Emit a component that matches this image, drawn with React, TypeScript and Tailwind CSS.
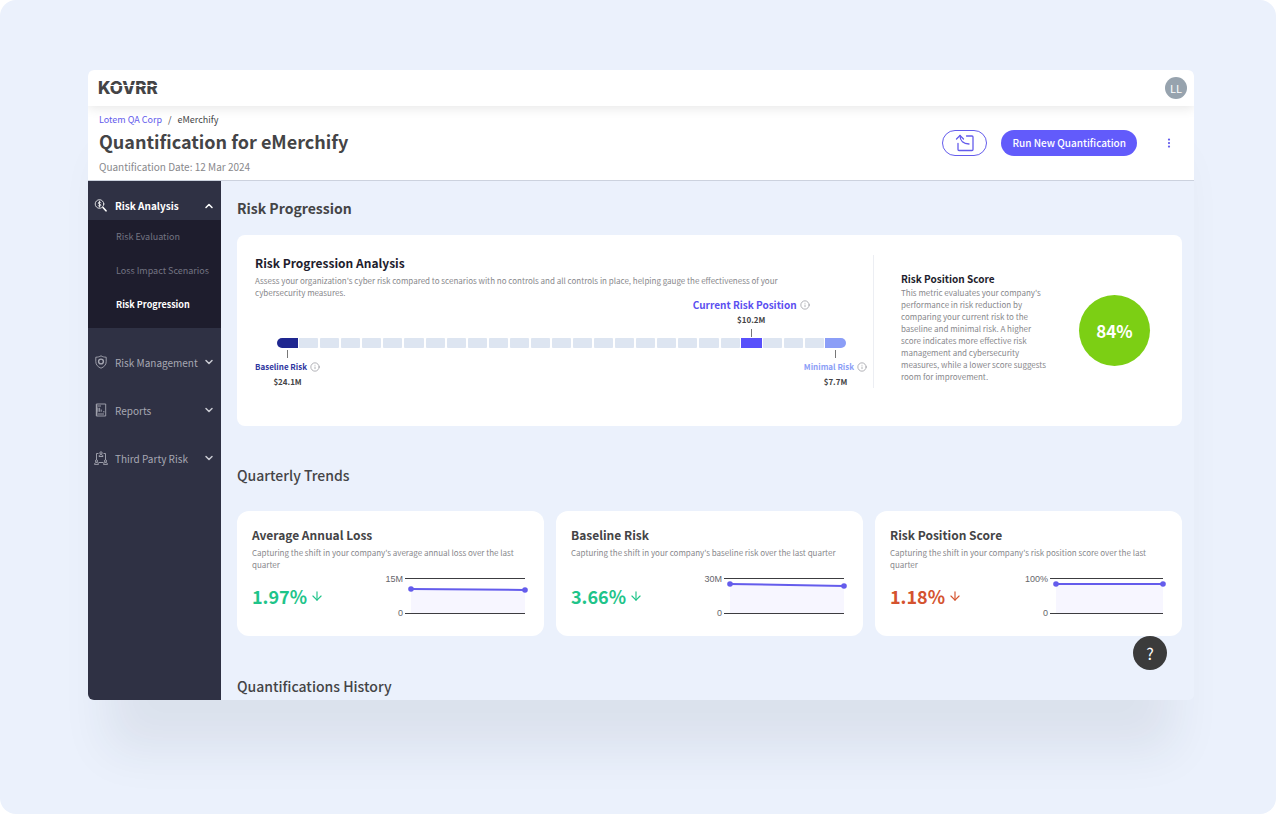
import type { ReactNode } from 'react';
import { ArrowDown, ChevronDown, ChevronUp, Info, MoreVertical } from 'lucide-react';

const SEGMENTS = 27;
const CURRENT_SEGMENT = 22;

const subItems = ['Risk Evaluation', 'Loss Impact Scenarios', 'Risk Progression'];

const trends = [
  {
    title: 'Average Annual Loss',
    text: "Capturing the shift in your company's average annual loss over the last quarter",
    value: '1.97%',
    color: 'text-[#1fc48a]',
    max: '15M',
    axis: 24,
    from: 15,
    to: 16,
  },
  {
    title: 'Baseline Risk',
    text: "Capturing the shift in your company's baseline risk over the last quarter",
    value: '3.66%',
    color: 'text-[#1fc48a]',
    max: '30M',
    axis: 24,
    from: 10,
    to: 12,
  },
  {
    title: 'Risk Position Score',
    text: "Capturing the shift in your company's risk position score over the last quarter",
    value: '1.18%',
    color: 'text-[#d4532f]',
    max: '100%',
    axis: 31,
    from: 10,
    to: 10,
  },
];

function Logo() {
  return (
    <a href="#" aria-label="Kovrr" className="relative block font-['Inter',sans-serif] text-[17px] leading-5 font-extrabold text-[#444446]">
      KOVRR
      <span className="absolute top-[7px] right-0 left-3 h-px bg-white" />
    </a>
  );
}

function ExportIcon() {
  return (
    <svg viewBox="0 0 20 18" className="h-[18px] w-5" fill="none" stroke="currentColor" strokeWidth="1.3" strokeLinecap="round" strokeLinejoin="round">
      <path d="M11.500 2h5.500q1 0 1 1v12.500q0 1-1 1H4q-1 0-1-1V9.500" />
      <path d="M1.500 5 5 1.500 8.500 5" />
      <path d="M5 1.500c0 5.500 3.500 8.500 9 8.500" />
    </svg>
  );
}

function AnalysisIcon() {
  return (
    <svg viewBox="0 0 14 14" className="size-3.5 shrink-0" fill="none" stroke="currentColor" strokeWidth="0.800" strokeLinecap="round">
      <circle cx="5.500" cy="5" r="4.300" />
      <path d="M7 3.600C6.600 3 4.200 2.800 4.200 4.100c0 1.400 2.800.600 2.800 2 0 1.300-2.400 1.200-2.900.500M5.500 2.100v6" />
      <path d="m9 8.500 3 3.300" strokeWidth="1.600" />
    </svg>
  );
}

function ShieldIcon() {
  return (
    <svg viewBox="0 0 14 14" className="size-3.5 shrink-0" fill="none" stroke="currentColor" strokeWidth="0.900" strokeLinejoin="round">
      <path d="M7 .800c1.500 1 3.300 1.400 5.200 1.400v4.500c0 3-2 5.200-5.200 6.500-3.200-1.300-5.200-3.500-5.200-6.500V2.200C3.700 2.200 5.500 1.800 7 .800Z" />
      <circle cx="7" cy="6.500" r="2.400" strokeWidth="1.400" />
    </svg>
  );
}

function ReportIcon() {
  return (
    <svg viewBox="0 0 14 14" className="size-3.5 shrink-0" fill="none" stroke="currentColor" strokeWidth="0.900">
      <path d="M2.300 1h9.400v12H2.300zM4 3h3M4 4.800v4M5.600 4.800v4M7.200 6.500v2.300M9 8.800h1.500M4 11h6" />
      <path d="M2.800 1.500v11" strokeWidth="1.200" />
    </svg>
  );
}

function ThirdPartyIcon() {
  return (
    <svg viewBox="0 0 14 14" className="size-3.5 shrink-0" fill="none" stroke="currentColor" strokeWidth="0.900">
      <circle cx="7" cy="2" r="1.200" />
      <path d="M5 5.500c0-2.500 4-2.500 4 0ZM4.500 2.500H2.500V9M9.500 2.500h2V9M4.500 11.500h5" />
      <circle cx="2.500" cy="10" r="1.100" />
      <circle cx="11.500" cy="10" r="1.100" />
      <path d="M.500 13.400c0-2.600 4-2.600 4 0ZM9.500 13.400c0-2.600 4-2.600 4 0Z" />
    </svg>
  );
}

const navItems = [
  { label: 'Risk Management', icon: <ShieldIcon /> },
  { label: 'Reports', icon: <ReportIcon /> },
  { label: 'Third Party Risk', icon: <ThirdPartyIcon /> },
];

function Sidebar() {
  return (
    <nav className="w-[133px] shrink-0 bg-[#2f3144] pt-2.5 text-[10px] text-[#a7a8b3]">
      <button className="flex h-[29px] w-full items-center gap-[7px] px-1.5 text-left font-bold text-white">
        <AnalysisIcon />
        <span className="grow">Risk Analysis</span>
        <ChevronUp className="size-3" strokeWidth={3} />
      </button>
      <ul className="bg-[#1e1d2d] pb-1.5 text-[9px]">
        {subItems.map((item) => (
          <li key={item}>
            <a
              href="#"
              className={`flex h-[34px] items-center pl-7 whitespace-nowrap ${item === 'Risk Progression' ? 'font-bold text-white' : 'text-[#737482]'}`}
            >
              {item}
            </a>
          </li>
        ))}
      </ul>
      <div className="mt-2.5 flex flex-col">
        {navItems.map((item) => (
          <button key={item.label} className="flex h-12 w-full items-center gap-[7px] px-1.5 text-left whitespace-nowrap">
            {item.icon}
            <span className="min-w-0 grow">{item.label}</span>
            <ChevronDown className="size-3 shrink-0 text-[#c9cad2]" strokeWidth={3} />
          </button>
        ))}
      </div>
    </nav>
  );
}

function MarkerLabel({ children, className }: { children: ReactNode; className: string }) {
  return (
    <div className={`flex items-center gap-[3px] leading-3 font-bold whitespace-nowrap ${className}`}>
      {children}
      <Info className="size-2.5 text-[#85878e]" strokeWidth={1.5} />
    </div>
  );
}

function RiskBar() {
  return (
    <div className="mr-[27px] ml-[22px] grid grid-cols-27 text-[8px] leading-3 text-[#444446]">
      <div className="col-start-23 flex flex-col items-center gap-[3px]">
        <MarkerLabel className="text-[10px] text-[#5b50f0]">Current Risk Position</MarkerLabel>
        <span className="font-bold">$10.2M</span>
        <span className="h-2 w-px bg-[#777]" />
      </div>
      <div className="col-span-full mt-px grid h-2.5 grid-cols-27 overflow-hidden rounded-full">
        {Array.from({ length: SEGMENTS }, (_, i) => {
          if (i === 0) return <span key={i} className="bg-[#1f2790]" />;
          if (i === CURRENT_SEGMENT) return <span key={i} className="bg-[#5850fb]" />;
          if (i === SEGMENTS - 1) return <span key={i} className="bg-[#8b9ef7]" />;
          return <span key={i} className="mx-px rounded-[1px] bg-[#dde5f1]" />;
        })}
      </div>
      <div className="col-start-1 mt-0.5 flex flex-col items-center gap-[3px]">
        <span className="h-2 w-px bg-[#777]" />
        <MarkerLabel className="text-[#2e35a0]">Baseline Risk</MarkerLabel>
        <span className="font-bold">$24.1M</span>
      </div>
      <div className="col-start-27 mt-0.5 flex flex-col items-center gap-[3px]">
        <span className="h-2 w-px bg-[#777]" />
        <MarkerLabel className="text-[#8b9ef7]">Minimal Risk</MarkerLabel>
        <span className="font-bold">$7.7M</span>
      </div>
    </div>
  );
}

function TrendChart({ max, axis, from, to }: { max: string; axis: number; from: number; to: number }) {
  return (
    <svg viewBox="0 0 148 44" className="h-11 w-[148px] shrink-0">
      <polygon points={`${axis + 6},${from} 144,${to} 144,39 ${axis + 6},39`} fill="#f7f6ff" />
      <path d={`M${axis} 4.500H144M${axis} 39.500H144`} stroke="#3c3c40" />
      <line x1={axis + 6} y1={from} x2="144" y2={to} stroke="#645cec" strokeWidth="2" />
      <circle cx={axis + 6} cy={from} r="2.800" fill="#645cec" />
      <circle cx="144" cy={to} r="2.800" fill="#645cec" />
      <g fill="#66666b" fontSize="9" textAnchor="end" fontFamily="Liberation Sans, sans-serif">
        <text x={axis - 2} y="8">{max}</text>
        <text x={axis - 2} y="42">0</text>
      </g>
    </svg>
  );
}

export default function App() {
  return (
    <div className="min-h-screen overflow-hidden rounded-2xl bg-[#ebf1fc] pt-[70px] pr-[82px] pb-[114px] pl-[88px] font-['Noto_Sans_CJK_SC',sans-serif] text-[#444446]">
      <div className="relative rounded-md shadow-[0_70px_45px_-20px_rgba(40,45,70,0.08)]">
        <div className="overflow-hidden rounded-md bg-[#ebf1fc]">
          <div className="relative flex h-9 items-center justify-between bg-white pr-[7px] pl-2.5 shadow-[0_2px_12px_rgba(0,0,0,0.1)]">
            <Logo />
            <button className="flex size-[22px] items-center justify-center rounded-full bg-[#97a3ae] text-[11px] text-white">LL</button>
          </div>

          <header className="flex items-center justify-between border-b border-[#ccd2de] bg-white pr-[19px] pl-[11px]">
            <div className="pt-2 pb-1.5">
              <p className="flex gap-1.5 text-[9px] leading-3">
                <a href="#" className="text-[#645cec]">Lotem QA Corp</a>
                <span>/</span>
                <span>eMerchify</span>
              </p>
              <h1 className="mt-[3px] text-[18px] leading-6 font-bold">Quantification for eMerchify</h1>
              <p className="mt-[7px] text-[10px] leading-3.5 text-[#88888c]">Quantification Date: 12 Mar 2024</p>
            </div>
            <div className="flex items-center text-[#645cec]">
              <button aria-label="Export" className="flex h-[26px] w-[45px] items-center justify-center rounded-full border border-[#645cec]">
                <ExportIcon />
              </button>
              <button className="ml-3.5 h-[26px] rounded-full bg-[#625bfb] px-[11px] pb-0.5 text-[10px] font-medium text-white">Run New Quantification</button>
              <button aria-label="More" className="ml-[26px]">
                <MoreVertical className="size-3" strokeWidth={2.5} />
              </button>
            </div>
          </header>

          <div className="flex">
            <Sidebar />
            <main className="min-w-0 grow pt-[15px] pr-3 pb-0.5 pl-4">
              <h2 className="text-[14px] leading-6 font-bold">Risk Progression</h2>
              <section className="mt-[15px] flex rounded-lg bg-white pt-5 pb-[38px] pl-[18px]">
                <div className="grow border-r border-[#eceef3]">
                  <h3 className="text-[12px] leading-4 font-bold text-[#1e1d2d]">Risk Progression Analysis</h3>
                  <p className="mt-1 max-w-[560px] text-[8px] leading-3 text-[#88888c]">
                    Assess your organization's cyber risk compared to scenarios with no controls and all controls in place, helping gauge the effectiveness of your cybersecurity measures.
                  </p>
                  <RiskBar />
                </div>
                <div className="flex w-[308px] shrink-0 items-center gap-[27px] pt-[18px] pl-[27px]">
                  <div className="w-[151px] shrink-0 self-start">
                    <h3 className="text-[10px] leading-3 font-bold text-[#1e1d2d]">Risk Position Score</h3>
                    <p className="mt-0.5 text-[8px] leading-3 text-[#88888c]">
                      This metric evaluates your company's performance in risk reduction by comparing your current risk to the baseline and minimal risk. A higher score indicates more effective risk management and cybersecurity measures, while a lower score suggests room for improvement.
                    </p>
                  </div>
                  <div className="flex size-[71px] shrink-0 items-center justify-center rounded-full bg-[#7ccf14] text-[17px] font-bold text-white">84%</div>
                </div>
              </section>

              <h2 className="mt-[37px] text-[14px] leading-6 font-medium">Quarterly Trends</h2>
              <div className="mt-6 grid grid-cols-3 gap-3">
                {trends.map((trend) => (
                  <section key={trend.title} className="flex flex-col rounded-xl bg-white px-[15px] pt-4 pb-[18px]">
                    <h3 className="text-[12px] leading-4 font-bold">{trend.title}</h3>
                    <p className="mt-1 text-[8px] leading-3 text-[#88888c]">{trend.text}</p>
                    <div className="mt-[3px] flex grow items-end justify-between">
                      <p className={`flex items-center gap-[3px] pb-2.5 text-[18px] leading-6 font-bold ${trend.color}`}>
                        {trend.value}
                        <ArrowDown className="size-3.5" strokeWidth={2} />
                      </p>
                      <TrendChart max={trend.max} axis={trend.axis} from={trend.from} to={trend.to} />
                    </div>
                  </section>
                ))}
              </div>

              <h2 className="mt-[38px] text-[14px] leading-6 font-medium">Quantifications History</h2>
            </main>
          </div>
        </div>
        <button aria-label="Help" className="absolute right-[27px] bottom-[30px] size-[34px] rounded-full bg-[#3b3b3b] text-[16px] text-white">?</button>
      </div>
    </div>
  );
}
